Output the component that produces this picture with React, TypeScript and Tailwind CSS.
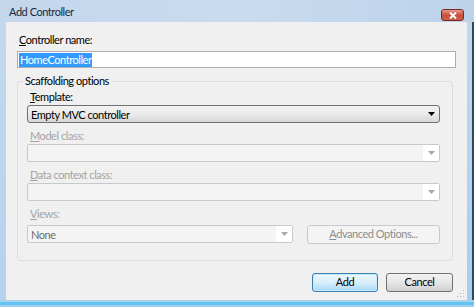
import React from "react";

const font = { fontFamily: 'Lato, "Noto Sans", Arial, sans-serif' };

function Arrow({ disabled }: { disabled?: boolean }) {
  return (
    <svg width="7" height="4" viewBox="0 0 7 4" className="block">
      <path d="M0 0h7L3.5 4z" fill={disabled ? "#a8a8a8" : "#000"} />
    </svg>
  );
}

function DisabledSelect({ value, className }: { value?: string; className: string }) {
  return (
    <div
      className={`flex h-[18px] items-center rounded-[2px] border border-[#c6cacd] bg-[#f4f4f4] ${className}`}
    >
      <span className="flex-1 pl-[3px] leading-none text-[#6d6d6d]">{value}</span>
      <div className="flex h-full w-[16px] items-center justify-center bg-white">
        <Arrow disabled />
      </div>
    </div>
  );
}

export default function App() {
  return (
    <div
      style={font}
      className="flex h-[307px] w-[474px] flex-col overflow-hidden bg-gradient-to-b from-[#bcd2ea] to-[#cfe0f3] text-[11px] tracking-[-0.45px] text-black"
    >
      {/* title bar */}
      <div className="flex h-[22px] shrink-0 items-start justify-between bg-gradient-to-r from-[#c3d6ec] via-[#c9dbef] to-[#bcd3ea]">
        <span className="pl-[9px] pt-[5px] text-[11px] leading-[14px] text-[#1a2a3a]">Add Controller</span>
        <div className="mr-[10px] mt-[9px] flex h-[12px] w-[23px] items-center justify-center rounded-[3px] border border-[#7a2a22] bg-gradient-to-b from-[#e59a8c] via-[#c8503c] to-[#c8604a]">
          <svg width="8" height="7" viewBox="0 0 8 7">
            <path d="M1 0.5L7 6.5M7 0.5L1 6.5" stroke="#fff" strokeWidth="1.8" />
          </svg>
        </div>
      </div>

      <div className="flex flex-1">
        <div className="w-[6px] shrink-0 bg-gradient-to-b from-[#c4d8ee] to-[#b6d2ee]" />

        {/* client area */}
        <div className="relative flex w-[461px] flex-col bg-[#f0f0f0] px-[11px] pt-[11px]">
          <div className="pl-[2px] leading-[14px]">
            <u>C</u>ontroller name:
          </div>
          <div className="mt-[4px] flex h-[17px] w-[439px] items-center border border-[#abadb3] bg-white pl-[1px]">
            <span className="bg-[#3399ff] px-[1px] leading-[14px] text-white">HomeController</span>
          </div>

          {/* group box */}
          <div className="relative mt-[13px] h-[180px] w-[436px] rounded-[3px] border border-[#d5dfe5] pl-[9px]">
            <span className="absolute -top-[8px] left-[5px] bg-[#f0f0f0] px-[2px] leading-[14px]">
              Scaffolding options
            </span>
            <div className="mt-[8px] pl-[3px] leading-[14px]">
              <u>T</u>emplate:
            </div>
            <div className="mt-[1px] flex h-[18px] w-[413px] items-center justify-between rounded-[3px] border border-[#707070] bg-gradient-to-b from-[#f2f2f2] via-[#ebebeb] to-[#d6d6d6] pl-[3px] pr-[4px]">
              <span className="leading-none">Empty MVC controller</span>
              <Arrow />
            </div>

            <div className="mt-[6px] pl-[3px] leading-[14px] text-[#a3a3a3]">
              <u>M</u>odel class:
            </div>
            <DisabledSelect className="mt-[1px] w-[413px]" />

            <div className="mt-[6px] pl-[3px] leading-[14px] text-[#a3a3a3]">
              <u>D</u>ata context class:
            </div>
            <DisabledSelect className="mt-[1px] w-[413px]" />

            <div className="mt-[6px] pl-[3px] leading-[14px] text-[#a3a3a3]">
              <u>V</u>iews:
            </div>
            <div className="mt-[4px] flex items-start">
              <DisabledSelect value="None" className="w-[266px]" />
              <div className="ml-[14px] flex h-[19px] w-[133px] items-center justify-center rounded-[3px] border border-[#c6cacd] bg-[#f4f4f4] text-[#8d8d8d]">
                <span>
                  <u>A</u>dvanced Options...
                </span>
              </div>
            </div>
          </div>

          {/* buttons */}
          <div className="mt-[12px] flex w-[436px] justify-end gap-[8px]">
            <div className="flex h-[19px] w-[66px] items-center justify-center rounded-[3px] border border-[#3c7fb1] bg-gradient-to-b from-[#eaf6fd] via-[#d9f0fc] to-[#a7d9f5] shadow-[inset_0_0_0_1px_#c6e9fb]">
              Add
            </div>
            <div className="flex h-[19px] w-[67px] items-center justify-center rounded-[3px] border border-[#707070] bg-gradient-to-b from-[#f2f2f2] via-[#e6e6e6] to-[#cfcfcf]">
              Cancel
            </div>
          </div>

          {/* resize grip */}
          <svg width="8" height="8" viewBox="0 0 8 8" className="absolute bottom-[2px] right-[2px]">
            <g fill="#b8b8b8">
              <rect x="6" y="0" width="1" height="1" />
              <rect x="3" y="3" width="1" height="1" />
              <rect x="6" y="3" width="1" height="1" />
              <rect x="0" y="6" width="1" height="1" />
              <rect x="3" y="6" width="1" height="1" />
              <rect x="6" y="6" width="1" height="1" />
            </g>
          </svg>
        </div>

        <div className="flex w-[7px] shrink-0">
          <div className="w-[5px] bg-gradient-to-b from-[#c3d7ec] to-[#a9cdee]" />
          <div className="w-[2px] bg-[#2c4a5e]" />
        </div>
      </div>

      {/* bottom frame */}
      <div className="flex h-[7px] shrink-0 flex-col">
        <div className="h-[2px] bg-[#a9d0ef]" />
        <div className="h-[3px] bg-[#62c4f2]" />
        <div className="h-[2px] bg-[#9fd0ef]" />
      </div>
    </div>
  );
}
